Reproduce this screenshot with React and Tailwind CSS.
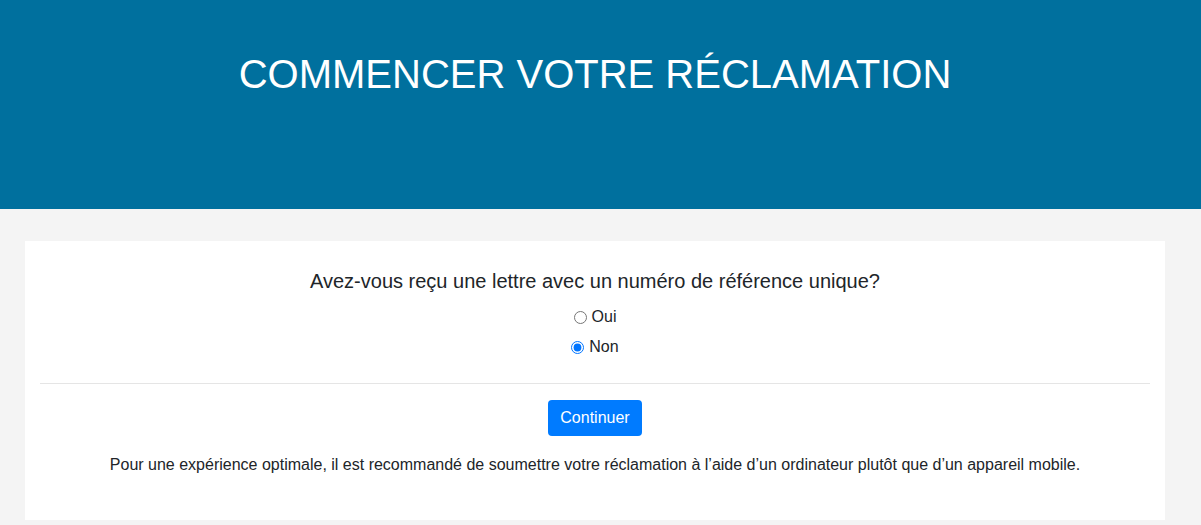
export default function App() {
  return (
    <div className="min-h-[525px] bg-[#f4f4f4] text-[#212529]" style={{ fontFamily: '"Liberation Sans", Arial, sans-serif' }}>
      <header className="h-[209px] bg-[#00709e] pt-[50px]">
        <h1 className="w-[1190px] text-center text-[40px] leading-[1.2] text-white">COMMENCER VOTRE RÉCLAMATION</h1>
      </header>
      <main className="ml-[25px] mt-[32px] w-[1140px] bg-white px-[15px] pt-[25px] pb-[43px]">
        <p className="text-center text-[20px] leading-[30px]">Avez-vous reçu une lettre avec un numéro de référence unique?</p>
        <div className="mt-[9px] flex flex-col items-center gap-[6px] text-[16px] leading-[24px]">
          <label className="flex items-center gap-[5px]">
            <input type="radio" name="ref" className="m-0 h-[13px] w-[13px] accent-[#0075ff]" />
            Oui
          </label>
          <label className="flex items-center gap-[5px]">
            <input type="radio" name="ref" defaultChecked className="m-0 h-[13px] w-[13px] accent-[#0075ff]" />
            Non
          </label>
        </div>
        <hr className="mt-[24px] border-0 border-t border-[#e5e5e5]" />
        <div className="mt-[16px] flex justify-center">
          <button className="rounded-[4px] bg-[#007bff] px-[12px] py-[6px] text-[16px] leading-[24px] text-white">Continuer</button>
        </div>
        <p className="mt-[17px] text-center text-[16px] leading-[24px]">Pour une expérience optimale, il est recommandé de soumettre votre réclamation à l’aide d’un ordinateur plutôt que d’un appareil mobile.</p>
      </main>
    </div>
  );
}
